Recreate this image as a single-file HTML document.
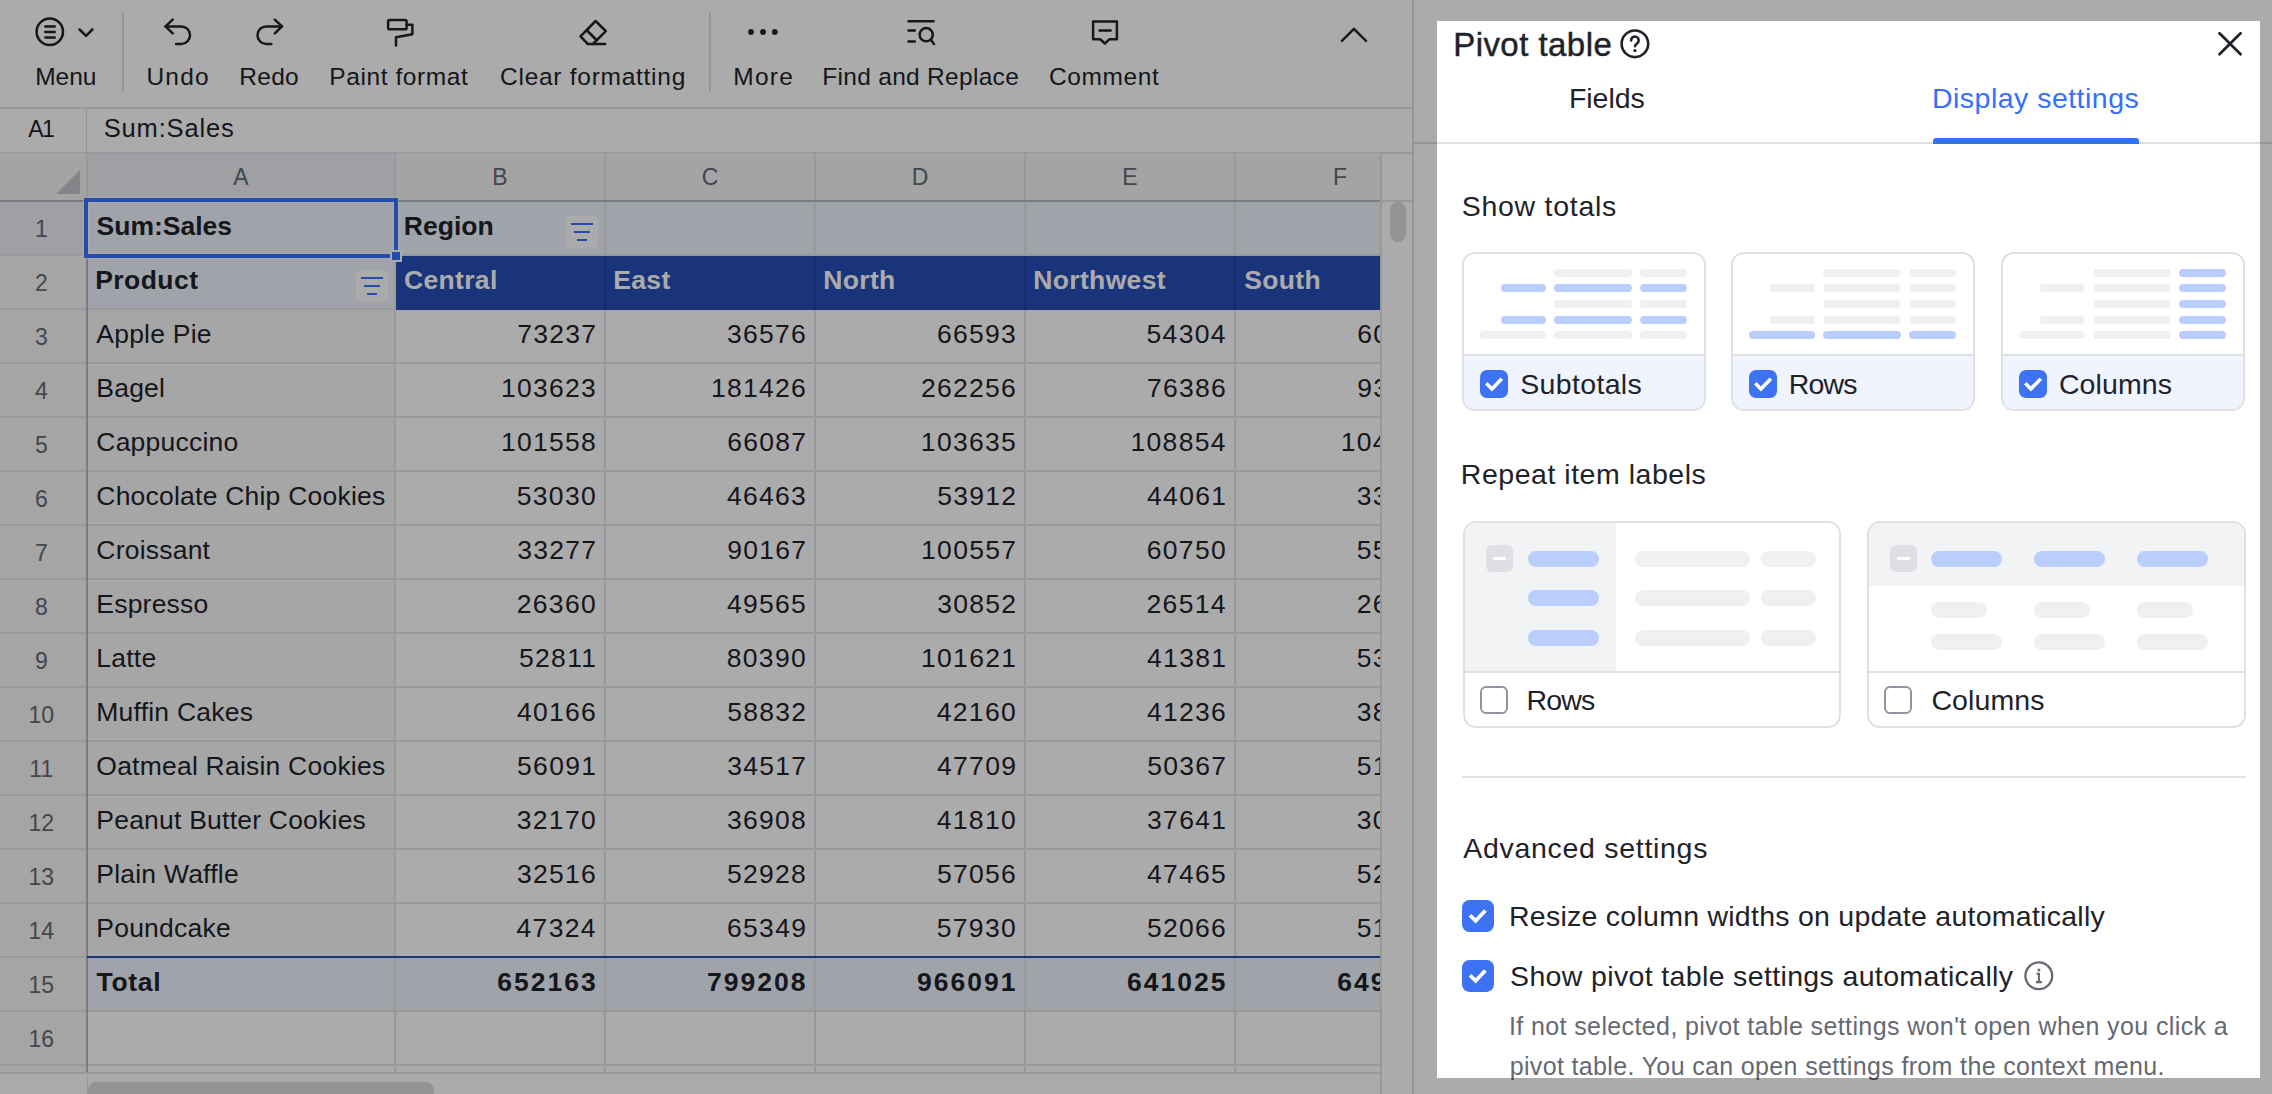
<!DOCTYPE html>
<html><head><meta charset="utf-8"><style>
html,body{margin:0;padding:0;width:2272px;height:1094px;overflow:hidden;background:#fff;}
body{position:relative;font-family:"Liberation Sans", sans-serif;}
.r{position:absolute;}
.t{position:absolute;white-space:nowrap;}
</style></head><body>
<div class="r" style="left:0px;top:0px;width:1413px;height:1094px;background:#ffffff;"></div>
<div class="r" style="left:0px;top:0px;width:1413px;height:107px;background:#ffffff;"></div>
<div class="r" style="left:0px;top:107px;width:1413px;height:2px;background:#e3e4e6;"></div>
<div class="r" style="left:122px;top:12px;width:2px;height:80px;background:#dee0e3;"></div>
<div class="r" style="left:709px;top:12px;width:2px;height:80px;background:#dee0e3;"></div>
<div class="t" style="left:35.19px;top:65.16px;font-size:24.5px;line-height:24.5px;letter-spacing:-0.016px;color:#1f2329;font-weight:normal;">Menu</div>
<div class="t" style="left:146.41px;top:65.16px;font-size:24.5px;line-height:24.5px;letter-spacing:1.245px;color:#1f2329;font-weight:normal;">Undo</div>
<div class="t" style="left:239.29px;top:65.16px;font-size:24.5px;line-height:24.5px;letter-spacing:0.286px;color:#1f2329;font-weight:normal;">Redo</div>
<div class="t" style="left:329.29px;top:65.16px;font-size:24.5px;line-height:24.5px;letter-spacing:0.591px;color:#1f2329;font-weight:normal;">Paint format</div>
<div class="t" style="left:500.07px;top:65.16px;font-size:24.5px;line-height:24.5px;letter-spacing:0.727px;color:#1f2329;font-weight:normal;">Clear formatting</div>
<div class="t" style="left:733.29px;top:65.16px;font-size:24.5px;line-height:24.5px;letter-spacing:1.225px;color:#1f2329;font-weight:normal;">More</div>
<div class="t" style="left:822.29px;top:65.16px;font-size:24.5px;line-height:24.5px;letter-spacing:0.297px;color:#1f2329;font-weight:normal;">Find and Replace</div>
<div class="t" style="left:1049.08px;top:65.16px;font-size:24.5px;line-height:24.5px;letter-spacing:0.598px;color:#1f2329;font-weight:normal;">Comment</div>
<svg class="r" style="left:34px;top:16px;" width="32" height="32" viewBox="0 0 32 32"><circle cx="15.8" cy="15.8" r="13.2" fill="none" stroke="#1f2329" stroke-width="2.5" stroke-linecap="round" stroke-linejoin="round" stroke-width="2.8"/><path d="M11.3 10.5H20.7M11.3 16H20.7M11.3 21.4H20.7" fill="none" stroke="#1f2329" stroke-width="2.5" stroke-linecap="round" stroke-linejoin="round" stroke-width="2.6"/></svg>
<svg class="r" style="left:78px;top:27px;" width="16" height="12" viewBox="0 0 16 12"><path d="M1.6 2.5L8 8.9L14.4 2.5" fill="none" stroke="#1f2329" stroke-width="2.5" stroke-linecap="round" stroke-linejoin="round" stroke-width="2.2"/></svg>
<svg class="r" style="left:162px;top:17px;" width="32" height="32" viewBox="0 0 32 32"><path d="M10.7 2.7L3.5 9.4L10.7 16.4" fill="none" stroke="#1f2329" stroke-width="2.5" stroke-linecap="round" stroke-linejoin="round"/><path d="M3.5 9.4H19.25A8.75 8.75 0 0 1 19.25 26.9H14.2" fill="none" stroke="#1f2329" stroke-width="2.5" stroke-linecap="round" stroke-linejoin="round"/></svg>
<svg class="r" style="left:254px;top:17px;" width="32" height="32" viewBox="0 0 32 32"><path d="M20.8 2.7L28 9.4L20.8 16.4" fill="none" stroke="#1f2329" stroke-width="2.5" stroke-linecap="round" stroke-linejoin="round"/><path d="M28 9.4H12.25A8.75 8.75 0 0 0 12.25 26.9H17.3" fill="none" stroke="#1f2329" stroke-width="2.5" stroke-linecap="round" stroke-linejoin="round"/></svg>
<svg class="r" style="left:385px;top:17px;" width="32" height="32" viewBox="0 0 32 32"><rect x="3.1" y="2.9" width="18.5" height="9.4" rx="1.6" fill="none" stroke="#1f2329" stroke-width="2.5" stroke-linecap="round" stroke-linejoin="round"/><path d="M21.6 7.8H27.4V17.3L11 20.3V28.6" fill="none" stroke="#1f2329" stroke-width="2.5" stroke-linecap="round" stroke-linejoin="round"/></svg>
<svg class="r" style="left:577px;top:17px;" width="32" height="32" viewBox="0 0 32 32"><path d="M10.7 26.9L3.5 19.3L18.6 4L28.8 14.2L16 27" fill="none" stroke="#1f2329" stroke-width="2.5" stroke-linecap="round" stroke-linejoin="round" stroke-width="2.2"/><path d="M10.7 26.9H28.2M10 13.5L19.5 23" fill="none" stroke="#1f2329" stroke-width="2.5" stroke-linecap="round" stroke-linejoin="round" stroke-width="2.2"/></svg>
<svg class="r" style="left:745px;top:26px;" width="36" height="12" viewBox="0 0 36 12"><circle cx="6" cy="5.9" r="2.85" fill="#1f2329"/><circle cx="18" cy="5.9" r="2.85" fill="#1f2329"/><circle cx="29.8" cy="5.9" r="2.85" fill="#1f2329"/></svg>
<svg class="r" style="left:905px;top:17px;" width="32" height="32" viewBox="0 0 32 32"><path d="M3.5 4.3H28.6M3.5 13.6H9.9M3.5 24.5H9.9" fill="none" stroke="#1f2329" stroke-width="2.5" stroke-linecap="round" stroke-linejoin="round" stroke-width="2.6"/><circle cx="21.2" cy="17.7" r="6.6" fill="none" stroke="#1f2329" stroke-width="2.5" stroke-linecap="round" stroke-linejoin="round" stroke-width="2.5"/><path d="M26.4 23.4L29 27.1" fill="none" stroke="#1f2329" stroke-width="2.5" stroke-linecap="round" stroke-linejoin="round" stroke-width="2.5"/></svg>
<svg class="r" style="left:1089px;top:17px;" width="32" height="32" viewBox="0 0 32 32"><path d="M4.1 4.4H27.9V22.2H20.6L15.9 26.5L11.1 22.2H4.1Z" fill="none" stroke="#1f2329" stroke-width="2.5" stroke-linecap="round" stroke-linejoin="round" stroke-width="2.5"/><path d="M10.5 13.6H21.6" fill="none" stroke="#1f2329" stroke-width="2.5" stroke-linecap="round" stroke-linejoin="round" stroke-width="2.5"/></svg>
<svg class="r" style="left:1338px;top:25px;" width="32" height="20" viewBox="0 0 32 20"><path d="M3.9 15.8L15.9 3.9L28 15.8" fill="none" stroke="#1f2329" stroke-width="2.5" stroke-linecap="round" stroke-linejoin="round" stroke-width="2.4"/></svg>
<div class="r" style="left:86px;top:107px;width:1px;height:46px;background:#dee0e3;"></div>
<div class="r" style="left:0px;top:152px;width:1413px;height:2px;background:#e3e4e6;"></div>
<div class="t" style="left:28.25px;top:118.33px;font-size:23px;line-height:23px;letter-spacing:-1.579px;color:#1f2329;font-weight:normal;">A1</div>
<div class="t" style="left:103.75px;top:116.21px;font-size:25.5px;line-height:25.5px;letter-spacing:0.822px;color:#1f2329;font-weight:normal;">Sum:Sales</div>
<div class="r" style="left:0;top:0;width:1380px;height:1073px;overflow:hidden">
<div class="r" style="left:0px;top:153px;width:1380px;height:47px;background:#f5f5f5;"></div>
<div class="r" style="left:87px;top:153px;width:308px;height:47px;background:#eceff5;"></div>
<div class="r" style="left:0px;top:202px;width:86px;height:872px;background:#f6f6f6;"></div>
<div class="r" style="left:0px;top:202px;width:86px;height:52px;background:#eceff5;"></div>
<div class="r" style="left:87px;top:202px;width:1380px;height:52px;background:#f0f4ff;"></div>
<div class="r" style="left:87px;top:256px;width:308px;height:52px;background:#f0f4ff;"></div>
<div class="r" style="left:87px;top:310px;width:308px;height:648px;background:#f8f8f8;"></div>
<div class="r" style="left:87px;top:958px;width:1380px;height:52px;background:#f0f4ff;"></div>
<div class="r" style="left:0px;top:254px;width:1380px;height:2px;background:#e3e4e6;"></div>
<div class="r" style="left:0px;top:308px;width:1380px;height:2px;background:#e3e4e6;"></div>
<div class="r" style="left:0px;top:362px;width:1380px;height:2px;background:#e3e4e6;"></div>
<div class="r" style="left:0px;top:416px;width:1380px;height:2px;background:#e3e4e6;"></div>
<div class="r" style="left:0px;top:470px;width:1380px;height:2px;background:#e3e4e6;"></div>
<div class="r" style="left:0px;top:524px;width:1380px;height:2px;background:#e3e4e6;"></div>
<div class="r" style="left:0px;top:578px;width:1380px;height:2px;background:#e3e4e6;"></div>
<div class="r" style="left:0px;top:632px;width:1380px;height:2px;background:#e3e4e6;"></div>
<div class="r" style="left:0px;top:686px;width:1380px;height:2px;background:#e3e4e6;"></div>
<div class="r" style="left:0px;top:740px;width:1380px;height:2px;background:#e3e4e6;"></div>
<div class="r" style="left:0px;top:794px;width:1380px;height:2px;background:#e3e4e6;"></div>
<div class="r" style="left:0px;top:848px;width:1380px;height:2px;background:#e3e4e6;"></div>
<div class="r" style="left:0px;top:902px;width:1380px;height:2px;background:#e3e4e6;"></div>
<div class="r" style="left:0px;top:956px;width:1380px;height:2px;background:#e3e4e6;"></div>
<div class="r" style="left:0px;top:1010px;width:1380px;height:2px;background:#e3e4e6;"></div>
<div class="r" style="left:0px;top:1064px;width:1380px;height:2px;background:#e3e4e6;"></div>
<div class="r" style="left:394px;top:153px;width:2px;height:920px;background:#e3e4e6;"></div>
<div class="r" style="left:604px;top:153px;width:2px;height:920px;background:#e3e4e6;"></div>
<div class="r" style="left:814px;top:153px;width:2px;height:920px;background:#e3e4e6;"></div>
<div class="r" style="left:1024px;top:153px;width:2px;height:920px;background:#e3e4e6;"></div>
<div class="r" style="left:1234px;top:153px;width:2px;height:920px;background:#e3e4e6;"></div>
<div class="r" style="left:396px;top:256px;width:1380px;height:54px;background:#264eb7;"></div>
<div class="r" style="left:604px;top:256px;width:2px;height:54px;background:#21409f;"></div>
<div class="r" style="left:814px;top:256px;width:2px;height:54px;background:#21409f;"></div>
<div class="r" style="left:1024px;top:256px;width:2px;height:54px;background:#21409f;"></div>
<div class="r" style="left:1234px;top:256px;width:2px;height:54px;background:#21409f;"></div>
<div class="r" style="left:0px;top:200px;width:1380px;height:2px;background:#b9babc;"></div>
<div class="r" style="left:86px;top:153px;width:2px;height:47px;background:#e3e4e6;"></div>
<div class="r" style="left:86px;top:202px;width:2px;height:871px;background:#b9babc;"></div>
<div class="r" style="left:87px;top:956px;width:1380px;height:2px;background:#264eb7;"></div>
<svg class="r" style="left:56px;top:170px;" width="24" height="24" viewBox="0 0 24 24"><path d="M24 0V24H0z" fill="#c2c5ca"/></svg>
<div class="t" style="left:-259.0px;width:1000px;text-align:center;top:166.23px;font-size:23px;line-height:23px;color:#646a73;font-weight:normal;">A</div>
<div class="t" style="left:0.0px;width:1000px;text-align:center;top:166.23px;font-size:23px;line-height:23px;color:#646a73;font-weight:normal;">B</div>
<div class="t" style="left:210.0px;width:1000px;text-align:center;top:166.23px;font-size:23px;line-height:23px;color:#646a73;font-weight:normal;">C</div>
<div class="t" style="left:420.0px;width:1000px;text-align:center;top:166.23px;font-size:23px;line-height:23px;color:#646a73;font-weight:normal;">D</div>
<div class="t" style="left:630.0px;width:1000px;text-align:center;top:166.23px;font-size:23px;line-height:23px;color:#646a73;font-weight:normal;">E</div>
<div class="t" style="left:840.0px;width:1000px;text-align:center;top:166.23px;font-size:23px;line-height:23px;color:#646a73;font-weight:normal;">F</div>
<div class="t" style="left:-458.7px;width:1000px;text-align:center;top:218.03px;font-size:23px;line-height:23px;color:#646a73;font-weight:normal;">1</div>
<div class="t" style="left:-458.7px;width:1000px;text-align:center;top:272.03px;font-size:23px;line-height:23px;color:#646a73;font-weight:normal;">2</div>
<div class="t" style="left:-458.7px;width:1000px;text-align:center;top:326.03px;font-size:23px;line-height:23px;color:#646a73;font-weight:normal;">3</div>
<div class="t" style="left:-458.7px;width:1000px;text-align:center;top:380.03px;font-size:23px;line-height:23px;color:#646a73;font-weight:normal;">4</div>
<div class="t" style="left:-458.7px;width:1000px;text-align:center;top:434.03px;font-size:23px;line-height:23px;color:#646a73;font-weight:normal;">5</div>
<div class="t" style="left:-458.7px;width:1000px;text-align:center;top:488.03px;font-size:23px;line-height:23px;color:#646a73;font-weight:normal;">6</div>
<div class="t" style="left:-458.7px;width:1000px;text-align:center;top:542.03px;font-size:23px;line-height:23px;color:#646a73;font-weight:normal;">7</div>
<div class="t" style="left:-458.7px;width:1000px;text-align:center;top:596.03px;font-size:23px;line-height:23px;color:#646a73;font-weight:normal;">8</div>
<div class="t" style="left:-458.7px;width:1000px;text-align:center;top:650.03px;font-size:23px;line-height:23px;color:#646a73;font-weight:normal;">9</div>
<div class="t" style="left:-458.7px;width:1000px;text-align:center;top:704.03px;font-size:23px;line-height:23px;color:#646a73;font-weight:normal;">10</div>
<div class="t" style="left:-458.7px;width:1000px;text-align:center;top:758.03px;font-size:23px;line-height:23px;color:#646a73;font-weight:normal;">11</div>
<div class="t" style="left:-458.7px;width:1000px;text-align:center;top:812.03px;font-size:23px;line-height:23px;color:#646a73;font-weight:normal;">12</div>
<div class="t" style="left:-458.7px;width:1000px;text-align:center;top:866.03px;font-size:23px;line-height:23px;color:#646a73;font-weight:normal;">13</div>
<div class="t" style="left:-458.7px;width:1000px;text-align:center;top:920.03px;font-size:23px;line-height:23px;color:#646a73;font-weight:normal;">14</div>
<div class="t" style="left:-458.7px;width:1000px;text-align:center;top:974.03px;font-size:23px;line-height:23px;color:#646a73;font-weight:normal;">15</div>
<div class="t" style="left:-458.7px;width:1000px;text-align:center;top:1028.03px;font-size:23px;line-height:23px;color:#646a73;font-weight:normal;">16</div>
<div class="t" style="left:-458.7px;width:1000px;text-align:center;top:1082.03px;font-size:23px;line-height:23px;color:#646a73;font-weight:normal;">17</div>
<div class="t" style="left:96.56px;top:213.47px;font-size:26.5px;line-height:26.5px;letter-spacing:-0.012px;color:#1f2329;font-weight:bold;">Sum:Sales</div>
<div class="t" style="left:403.85px;top:213.47px;font-size:26.5px;line-height:26.5px;letter-spacing:-0.003px;color:#1f2329;font-weight:bold;">Region</div>
<div class="t" style="left:95.15px;top:267.47px;font-size:26.5px;line-height:26.5px;letter-spacing:0.458px;color:#1f2329;font-weight:bold;">Product</div>
<div class="t" style="left:403.91px;top:267.47px;font-size:26.5px;line-height:26.5px;letter-spacing:0.350px;color:#ffffff;font-weight:bold">Central</div>
<div class="t" style="left:613.25px;top:267.47px;font-size:26.5px;line-height:26.5px;letter-spacing:0.350px;color:#ffffff;font-weight:bold">East</div>
<div class="t" style="left:823.25px;top:267.47px;font-size:26.5px;line-height:26.5px;letter-spacing:0.350px;color:#ffffff;font-weight:bold">North</div>
<div class="t" style="left:1033.25px;top:267.47px;font-size:26.5px;line-height:26.5px;letter-spacing:0.350px;color:#ffffff;font-weight:bold">Northwest</div>
<div class="t" style="left:1244.26px;top:267.47px;font-size:26.5px;line-height:26.5px;letter-spacing:0.350px;color:#ffffff;font-weight:bold">South</div>
<div class="t" style="left:96.3px;top:321.47px;font-size:26.5px;line-height:26.5px;letter-spacing:0.22px;color:#1f2329">Apple Pie</div>
<div class="t" style="left:517.13px;top:321.47px;font-size:26.5px;line-height:26.5px;letter-spacing:1.300px;color:#1f2329;font-weight:normal">73237</div>
<div class="t" style="left:726.94px;top:321.47px;font-size:26.5px;line-height:26.5px;letter-spacing:1.300px;color:#1f2329;font-weight:normal">36576</div>
<div class="t" style="left:936.94px;top:321.47px;font-size:26.5px;line-height:26.5px;letter-spacing:1.300px;color:#1f2329;font-weight:normal">66593</div>
<div class="t" style="left:1146.57px;top:321.47px;font-size:26.5px;line-height:26.5px;letter-spacing:1.300px;color:#1f2329;font-weight:normal">54304</div>
<div class="t" style="left:1357.13px;top:321.47px;font-size:26.5px;line-height:26.5px;letter-spacing:1.300px;color:#1f2329;font-weight:normal">60412</div>
<div class="t" style="left:96.3px;top:375.47px;font-size:26.5px;line-height:26.5px;letter-spacing:0.22px;color:#1f2329">Bagel</div>
<div class="t" style="left:500.91px;top:375.47px;font-size:26.5px;line-height:26.5px;letter-spacing:1.300px;color:#1f2329;font-weight:normal">103623</div>
<div class="t" style="left:710.91px;top:375.47px;font-size:26.5px;line-height:26.5px;letter-spacing:1.300px;color:#1f2329;font-weight:normal">181426</div>
<div class="t" style="left:920.91px;top:375.47px;font-size:26.5px;line-height:26.5px;letter-spacing:1.300px;color:#1f2329;font-weight:normal">262256</div>
<div class="t" style="left:1146.94px;top:375.47px;font-size:26.5px;line-height:26.5px;letter-spacing:1.300px;color:#1f2329;font-weight:normal">76386</div>
<div class="t" style="left:1357.13px;top:375.47px;font-size:26.5px;line-height:26.5px;letter-spacing:1.300px;color:#1f2329;font-weight:normal">93412</div>
<div class="t" style="left:96.3px;top:429.47px;font-size:26.5px;line-height:26.5px;letter-spacing:0.22px;color:#1f2329">Cappuccino</div>
<div class="t" style="left:500.91px;top:429.47px;font-size:26.5px;line-height:26.5px;letter-spacing:1.300px;color:#1f2329;font-weight:normal">101558</div>
<div class="t" style="left:727.13px;top:429.47px;font-size:26.5px;line-height:26.5px;letter-spacing:1.300px;color:#1f2329;font-weight:normal">66087</div>
<div class="t" style="left:920.86px;top:429.47px;font-size:26.5px;line-height:26.5px;letter-spacing:1.300px;color:#1f2329;font-weight:normal">103635</div>
<div class="t" style="left:1130.54px;top:429.47px;font-size:26.5px;line-height:26.5px;letter-spacing:1.300px;color:#1f2329;font-weight:normal">108854</div>
<div class="t" style="left:1340.78px;top:429.47px;font-size:26.5px;line-height:26.5px;letter-spacing:1.300px;color:#1f2329;font-weight:normal">104120</div>
<div class="t" style="left:96.3px;top:483.47px;font-size:26.5px;line-height:26.5px;letter-spacing:0.22px;color:#1f2329">Chocolate Chip Cookies</div>
<div class="t" style="left:516.81px;top:483.47px;font-size:26.5px;line-height:26.5px;letter-spacing:1.300px;color:#1f2329;font-weight:normal">53030</div>
<div class="t" style="left:726.94px;top:483.47px;font-size:26.5px;line-height:26.5px;letter-spacing:1.300px;color:#1f2329;font-weight:normal">46463</div>
<div class="t" style="left:937.13px;top:483.47px;font-size:26.5px;line-height:26.5px;letter-spacing:1.300px;color:#1f2329;font-weight:normal">53912</div>
<div class="t" style="left:1147.08px;top:483.47px;font-size:26.5px;line-height:26.5px;letter-spacing:1.300px;color:#1f2329;font-weight:normal">44061</div>
<div class="t" style="left:1356.81px;top:483.47px;font-size:26.5px;line-height:26.5px;letter-spacing:1.300px;color:#1f2329;font-weight:normal">33210</div>
<div class="t" style="left:96.3px;top:537.47px;font-size:26.5px;line-height:26.5px;letter-spacing:0.22px;color:#1f2329">Croissant</div>
<div class="t" style="left:517.13px;top:537.47px;font-size:26.5px;line-height:26.5px;letter-spacing:1.300px;color:#1f2329;font-weight:normal">33277</div>
<div class="t" style="left:727.13px;top:537.47px;font-size:26.5px;line-height:26.5px;letter-spacing:1.300px;color:#1f2329;font-weight:normal">90167</div>
<div class="t" style="left:921.09px;top:537.47px;font-size:26.5px;line-height:26.5px;letter-spacing:1.300px;color:#1f2329;font-weight:normal">100557</div>
<div class="t" style="left:1146.81px;top:537.47px;font-size:26.5px;line-height:26.5px;letter-spacing:1.300px;color:#1f2329;font-weight:normal">60750</div>
<div class="t" style="left:1356.81px;top:537.47px;font-size:26.5px;line-height:26.5px;letter-spacing:1.300px;color:#1f2329;font-weight:normal">55310</div>
<div class="t" style="left:96.3px;top:591.47px;font-size:26.5px;line-height:26.5px;letter-spacing:0.22px;color:#1f2329">Espresso</div>
<div class="t" style="left:516.81px;top:591.47px;font-size:26.5px;line-height:26.5px;letter-spacing:1.300px;color:#1f2329;font-weight:normal">26360</div>
<div class="t" style="left:726.89px;top:591.47px;font-size:26.5px;line-height:26.5px;letter-spacing:1.300px;color:#1f2329;font-weight:normal">49565</div>
<div class="t" style="left:937.13px;top:591.47px;font-size:26.5px;line-height:26.5px;letter-spacing:1.300px;color:#1f2329;font-weight:normal">30852</div>
<div class="t" style="left:1146.57px;top:591.47px;font-size:26.5px;line-height:26.5px;letter-spacing:1.300px;color:#1f2329;font-weight:normal">26514</div>
<div class="t" style="left:1356.81px;top:591.47px;font-size:26.5px;line-height:26.5px;letter-spacing:1.300px;color:#1f2329;font-weight:normal">26410</div>
<div class="t" style="left:96.3px;top:645.47px;font-size:26.5px;line-height:26.5px;letter-spacing:0.22px;color:#1f2329">Latte</div>
<div class="t" style="left:519.06px;top:645.47px;font-size:26.5px;line-height:26.5px;letter-spacing:1.300px;color:#1f2329;font-weight:normal">52811</div>
<div class="t" style="left:726.81px;top:645.47px;font-size:26.5px;line-height:26.5px;letter-spacing:1.300px;color:#1f2329;font-weight:normal">80390</div>
<div class="t" style="left:921.04px;top:645.47px;font-size:26.5px;line-height:26.5px;letter-spacing:1.300px;color:#1f2329;font-weight:normal">101621</div>
<div class="t" style="left:1147.08px;top:645.47px;font-size:26.5px;line-height:26.5px;letter-spacing:1.300px;color:#1f2329;font-weight:normal">41381</div>
<div class="t" style="left:1356.81px;top:645.47px;font-size:26.5px;line-height:26.5px;letter-spacing:1.300px;color:#1f2329;font-weight:normal">53310</div>
<div class="t" style="left:96.3px;top:699.47px;font-size:26.5px;line-height:26.5px;letter-spacing:0.22px;color:#1f2329">Muffin Cakes</div>
<div class="t" style="left:516.94px;top:699.47px;font-size:26.5px;line-height:26.5px;letter-spacing:1.300px;color:#1f2329;font-weight:normal">40166</div>
<div class="t" style="left:727.13px;top:699.47px;font-size:26.5px;line-height:26.5px;letter-spacing:1.300px;color:#1f2329;font-weight:normal">58832</div>
<div class="t" style="left:936.81px;top:699.47px;font-size:26.5px;line-height:26.5px;letter-spacing:1.300px;color:#1f2329;font-weight:normal">42160</div>
<div class="t" style="left:1146.94px;top:699.47px;font-size:26.5px;line-height:26.5px;letter-spacing:1.300px;color:#1f2329;font-weight:normal">41236</div>
<div class="t" style="left:1356.81px;top:699.47px;font-size:26.5px;line-height:26.5px;letter-spacing:1.300px;color:#1f2329;font-weight:normal">38410</div>
<div class="t" style="left:96.3px;top:753.47px;font-size:26.5px;line-height:26.5px;letter-spacing:0.22px;color:#1f2329">Oatmeal Raisin Cookies</div>
<div class="t" style="left:517.08px;top:753.47px;font-size:26.5px;line-height:26.5px;letter-spacing:1.300px;color:#1f2329;font-weight:normal">56091</div>
<div class="t" style="left:727.13px;top:753.47px;font-size:26.5px;line-height:26.5px;letter-spacing:1.300px;color:#1f2329;font-weight:normal">34517</div>
<div class="t" style="left:937.05px;top:753.47px;font-size:26.5px;line-height:26.5px;letter-spacing:1.300px;color:#1f2329;font-weight:normal">47709</div>
<div class="t" style="left:1147.13px;top:753.47px;font-size:26.5px;line-height:26.5px;letter-spacing:1.300px;color:#1f2329;font-weight:normal">50367</div>
<div class="t" style="left:1356.81px;top:753.47px;font-size:26.5px;line-height:26.5px;letter-spacing:1.300px;color:#1f2329;font-weight:normal">51210</div>
<div class="t" style="left:96.3px;top:807.47px;font-size:26.5px;line-height:26.5px;letter-spacing:0.22px;color:#1f2329">Peanut Butter Cookies</div>
<div class="t" style="left:516.81px;top:807.47px;font-size:26.5px;line-height:26.5px;letter-spacing:1.300px;color:#1f2329;font-weight:normal">32170</div>
<div class="t" style="left:726.94px;top:807.47px;font-size:26.5px;line-height:26.5px;letter-spacing:1.300px;color:#1f2329;font-weight:normal">36908</div>
<div class="t" style="left:936.81px;top:807.47px;font-size:26.5px;line-height:26.5px;letter-spacing:1.300px;color:#1f2329;font-weight:normal">41810</div>
<div class="t" style="left:1147.08px;top:807.47px;font-size:26.5px;line-height:26.5px;letter-spacing:1.300px;color:#1f2329;font-weight:normal">37641</div>
<div class="t" style="left:1356.81px;top:807.47px;font-size:26.5px;line-height:26.5px;letter-spacing:1.300px;color:#1f2329;font-weight:normal">30410</div>
<div class="t" style="left:96.3px;top:861.47px;font-size:26.5px;line-height:26.5px;letter-spacing:0.22px;color:#1f2329">Plain Waffle</div>
<div class="t" style="left:516.94px;top:861.47px;font-size:26.5px;line-height:26.5px;letter-spacing:1.300px;color:#1f2329;font-weight:normal">32516</div>
<div class="t" style="left:726.94px;top:861.47px;font-size:26.5px;line-height:26.5px;letter-spacing:1.300px;color:#1f2329;font-weight:normal">52928</div>
<div class="t" style="left:936.94px;top:861.47px;font-size:26.5px;line-height:26.5px;letter-spacing:1.300px;color:#1f2329;font-weight:normal">57056</div>
<div class="t" style="left:1146.89px;top:861.47px;font-size:26.5px;line-height:26.5px;letter-spacing:1.300px;color:#1f2329;font-weight:normal">47465</div>
<div class="t" style="left:1356.81px;top:861.47px;font-size:26.5px;line-height:26.5px;letter-spacing:1.300px;color:#1f2329;font-weight:normal">52310</div>
<div class="t" style="left:96.3px;top:915.47px;font-size:26.5px;line-height:26.5px;letter-spacing:0.22px;color:#1f2329">Poundcake</div>
<div class="t" style="left:516.57px;top:915.47px;font-size:26.5px;line-height:26.5px;letter-spacing:1.300px;color:#1f2329;font-weight:normal">47324</div>
<div class="t" style="left:727.05px;top:915.47px;font-size:26.5px;line-height:26.5px;letter-spacing:1.300px;color:#1f2329;font-weight:normal">65349</div>
<div class="t" style="left:936.81px;top:915.47px;font-size:26.5px;line-height:26.5px;letter-spacing:1.300px;color:#1f2329;font-weight:normal">57930</div>
<div class="t" style="left:1146.94px;top:915.47px;font-size:26.5px;line-height:26.5px;letter-spacing:1.300px;color:#1f2329;font-weight:normal">52066</div>
<div class="t" style="left:1356.81px;top:915.47px;font-size:26.5px;line-height:26.5px;letter-spacing:1.300px;color:#1f2329;font-weight:normal">51310</div>
<div class="t" style="left:96.61px;top:969.47px;font-size:26.5px;line-height:26.5px;letter-spacing:0.650px;color:#1f2329;font-weight:bold;">Total</div>
<div class="t" style="left:497.20px;top:969.47px;font-size:26.5px;line-height:26.5px;letter-spacing:2.000px;color:#1f2329;font-weight:bold">652163</div>
<div class="t" style="left:707.06px;top:969.47px;font-size:26.5px;line-height:26.5px;letter-spacing:2.000px;color:#1f2329;font-weight:bold">799208</div>
<div class="t" style="left:916.99px;top:969.47px;font-size:26.5px;line-height:26.5px;letter-spacing:2.000px;color:#1f2329;font-weight:bold">966091</div>
<div class="t" style="left:1126.99px;top:969.47px;font-size:26.5px;line-height:26.5px;letter-spacing:2.000px;color:#1f2329;font-weight:bold">641025</div>
<div class="t" style="left:1337.33px;top:969.47px;font-size:26.5px;line-height:26.5px;letter-spacing:2.000px;color:#1f2329;font-weight:bold">649310</div>
<div class="r" style="left:566px;top:216px;width:32px;height:32px;background:#ffffff;border-radius:5px;"></div>
<svg class="r" style="left:566px;top:216px;" width="32" height="32" viewBox="0 0 32 32"><path d="M5 8h22M8 16h16M11 24h10" stroke="#3370ff" stroke-width="2"/></svg>
<div class="r" style="left:356px;top:269.5px;width:32px;height:32px;background:#ffffff;border-radius:5px;"></div>
<svg class="r" style="left:356px;top:269.5px;" width="32" height="32" viewBox="0 0 32 32"><path d="M5 8h22M8 16h16M11 24h10" stroke="#3370ff" stroke-width="2"/></svg>
<div class="r" style="left:83px;top:197px;width:316px;height:62px;background:transparent;box-sizing:border-box;border:1px solid rgba(255,255,255,0.7);"></div>
<div class="r" style="left:84px;top:198px;width:314px;height:60px;background:transparent;box-sizing:border-box;border:4px solid #3370ff;"></div>
<div class="r" style="left:88px;top:202px;width:306px;height:52px;background:transparent;box-sizing:border-box;border:1px solid rgba(255,255,255,0.6);"></div>
<div class="r" style="left:390px;top:250px;width:12px;height:12px;background:#ffffff;"></div>
<div class="r" style="left:392px;top:252px;width:8px;height:8px;background:#3370ff;"></div>
</div>
<div class="r" style="left:1380px;top:153px;width:2px;height:941px;background:#e3e4e6;"></div>
<div class="r" style="left:1380px;top:200px;width:33px;height:2px;background:#e3e4e6;"></div>
<div class="r" style="left:1390px;top:202px;width:16px;height:40px;background:#dcdddf;border-radius:8px;"></div>
<div class="r" style="left:0px;top:1072px;width:1380px;height:2px;background:#e3e4e6;"></div>
<div class="r" style="left:87px;top:1074px;width:1px;height:20px;background:#e3e4e6;"></div>
<div class="r" style="left:88px;top:1082px;width:346px;height:20px;background:#dcdddf;border-radius:8px;"></div>
<div class="r" style="left:1412px;top:0px;width:2px;height:1094px;background:#dee0e3;"></div>
<div class="r" style="left:1414px;top:0px;width:858px;height:1094px;background:#ffffff;"></div>
<div class="r" style="left:1414px;top:142px;width:858px;height:1.5px;background:#dee0e3;"></div>
<div class="t" style="left:1453.19px;top:28.37px;font-size:33px;line-height:33px;letter-spacing:0.448px;color:#1f2329;font-weight:normal;-webkit-text-stroke:0.45px #1f2329;">Pivot table</div>
<svg class="r" style="left:1619px;top:28px;" width="32" height="32" viewBox="0 0 32 32"><circle cx="15.9" cy="15.8" r="13.3" fill="none" stroke="#1f2329" stroke-width="2.6"/><path d="M12.1 12.4A3.8 3.8 0 1 1 18.4 15.2C17 16.4 16 17 16 18.2" fill="none" stroke="#1f2329" stroke-width="2.6" stroke-linecap="round"/><circle cx="15.9" cy="22.6" r="1.6" fill="#1f2329"/></svg>
<svg class="r" style="left:2216px;top:30px;" width="28" height="28" viewBox="0 0 28 28"><path d="M3.5 3.2L24.6 24.3M24.6 3.2L3.5 24.3" stroke="#1f2329" stroke-width="2.7" stroke-linecap="round"/></svg>
<div class="t" style="left:1568.96px;top:84.07px;font-size:28.5px;line-height:28.5px;letter-spacing:-0.055px;color:#1f2329;font-weight:normal;">Fields</div>
<div class="t" style="left:1931.96px;top:84.07px;font-size:28.5px;line-height:28.5px;letter-spacing:0.479px;color:#3370ff;font-weight:normal;">Display settings</div>
<div class="r" style="left:1933px;top:138px;width:206px;height:6px;background:#3370ff;border-radius:3px 3px 0 0;"></div>
<div class="t" style="left:1461.72px;top:191.67px;font-size:28.5px;line-height:28.5px;letter-spacing:0.729px;color:#1f2329;font-weight:normal;">Show totals</div>
<div class="t" style="left:1460.86px;top:459.77px;font-size:28.5px;line-height:28.5px;letter-spacing:0.519px;color:#1f2329;font-weight:normal;">Repeat item labels</div>
<div class="t" style="left:1463.24px;top:833.97px;font-size:28.5px;line-height:28.5px;letter-spacing:0.705px;color:#1f2329;font-weight:normal;">Advanced settings</div>
<div class="r" style="left:1462px;top:252px;width:244px;height:159px;box-sizing:border-box;border:2px solid #dee0e3;border-radius:13px;overflow:hidden;background:#fff"><div class="r" style="left:0;top:100px;width:100%;height:60px;background:#f0f4ff;border-top:2px solid #dee0e3"></div></div>
<div class="r" style="left:1554px;top:268.7px;width:78px;height:8px;background:#eff0f1;border-radius:4px;"></div>
<div class="r" style="left:1640px;top:268.7px;width:47px;height:8px;background:#eff0f1;border-radius:4px;"></div>
<div class="r" style="left:1501px;top:284.3px;width:45px;height:8px;background:#bacefd;border-radius:4px;"></div>
<div class="r" style="left:1554px;top:284.3px;width:78px;height:8px;background:#bacefd;border-radius:4px;"></div>
<div class="r" style="left:1640px;top:284.3px;width:47px;height:8px;background:#bacefd;border-radius:4px;"></div>
<div class="r" style="left:1554px;top:300px;width:78px;height:8px;background:#eff0f1;border-radius:4px;"></div>
<div class="r" style="left:1640px;top:300px;width:47px;height:8px;background:#eff0f1;border-radius:4px;"></div>
<div class="r" style="left:1501px;top:315.6px;width:45px;height:8px;background:#bacefd;border-radius:4px;"></div>
<div class="r" style="left:1554px;top:315.6px;width:78px;height:8px;background:#bacefd;border-radius:4px;"></div>
<div class="r" style="left:1640px;top:315.6px;width:47px;height:8px;background:#bacefd;border-radius:4px;"></div>
<div class="r" style="left:1480px;top:331.2px;width:66px;height:8px;background:#eff0f1;border-radius:4px;"></div>
<div class="r" style="left:1554px;top:331.2px;width:78px;height:8px;background:#eff0f1;border-radius:4px;"></div>
<div class="r" style="left:1640px;top:331.2px;width:47px;height:8px;background:#eff0f1;border-radius:4px;"></div>
<div class="r" style="left:1479.5px;top:370px;width:28px;height:28px;background:#3d72f2;border-radius:7px;"></div>
<svg class="r" style="left:1479.5px;top:370px;" width="28" height="28" viewBox="0 0 28 28"><path d="M6.3 13.3L11.9 18.9L21.8 8.7" fill="none" stroke="#fff" stroke-width="3.6" stroke-linecap="butt" stroke-linejoin="miter"/></svg>
<div class="t" style="left:1520.22px;top:369.87px;font-size:28.5px;line-height:28.5px;letter-spacing:0.336px;color:#1f2329;font-weight:normal;">Subtotals</div>
<div class="r" style="left:1731px;top:252px;width:244px;height:159px;box-sizing:border-box;border:2px solid #dee0e3;border-radius:13px;overflow:hidden;background:#fff"><div class="r" style="left:0;top:100px;width:100%;height:60px;background:#f0f4ff;border-top:2px solid #dee0e3"></div></div>
<div class="r" style="left:1823px;top:268.7px;width:78px;height:8px;background:#eff0f1;border-radius:4px;"></div>
<div class="r" style="left:1909px;top:268.7px;width:47px;height:8px;background:#eff0f1;border-radius:4px;"></div>
<div class="r" style="left:1770px;top:284.3px;width:45px;height:8px;background:#eff0f1;border-radius:4px;"></div>
<div class="r" style="left:1823px;top:284.3px;width:78px;height:8px;background:#eff0f1;border-radius:4px;"></div>
<div class="r" style="left:1909px;top:284.3px;width:47px;height:8px;background:#eff0f1;border-radius:4px;"></div>
<div class="r" style="left:1823px;top:300px;width:78px;height:8px;background:#eff0f1;border-radius:4px;"></div>
<div class="r" style="left:1909px;top:300px;width:47px;height:8px;background:#eff0f1;border-radius:4px;"></div>
<div class="r" style="left:1770px;top:315.6px;width:45px;height:8px;background:#eff0f1;border-radius:4px;"></div>
<div class="r" style="left:1823px;top:315.6px;width:78px;height:8px;background:#eff0f1;border-radius:4px;"></div>
<div class="r" style="left:1909px;top:315.6px;width:47px;height:8px;background:#eff0f1;border-radius:4px;"></div>
<div class="r" style="left:1749px;top:331.2px;width:66px;height:8px;background:#bacefd;border-radius:4px;"></div>
<div class="r" style="left:1823px;top:331.2px;width:78px;height:8px;background:#bacefd;border-radius:4px;"></div>
<div class="r" style="left:1909px;top:331.2px;width:47px;height:8px;background:#bacefd;border-radius:4px;"></div>
<div class="r" style="left:1748.5px;top:370px;width:28px;height:28px;background:#3d72f2;border-radius:7px;"></div>
<svg class="r" style="left:1748.5px;top:370px;" width="28" height="28" viewBox="0 0 28 28"><path d="M6.3 13.3L11.9 18.9L21.8 8.7" fill="none" stroke="#fff" stroke-width="3.6" stroke-linecap="butt" stroke-linejoin="miter"/></svg>
<div class="t" style="left:1788.86px;top:369.87px;font-size:28.5px;line-height:28.5px;letter-spacing:-0.838px;color:#1f2329;font-weight:normal;">Rows</div>
<div class="r" style="left:2001px;top:252px;width:244px;height:159px;box-sizing:border-box;border:2px solid #dee0e3;border-radius:13px;overflow:hidden;background:#fff"><div class="r" style="left:0;top:100px;width:100%;height:60px;background:#f0f4ff;border-top:2px solid #dee0e3"></div></div>
<div class="r" style="left:2093px;top:268.7px;width:78px;height:8px;background:#eff0f1;border-radius:4px;"></div>
<div class="r" style="left:2179px;top:268.7px;width:47px;height:8px;background:#bacefd;border-radius:4px;"></div>
<div class="r" style="left:2040px;top:284.3px;width:45px;height:8px;background:#eff0f1;border-radius:4px;"></div>
<div class="r" style="left:2093px;top:284.3px;width:78px;height:8px;background:#eff0f1;border-radius:4px;"></div>
<div class="r" style="left:2179px;top:284.3px;width:47px;height:8px;background:#bacefd;border-radius:4px;"></div>
<div class="r" style="left:2093px;top:300px;width:78px;height:8px;background:#eff0f1;border-radius:4px;"></div>
<div class="r" style="left:2179px;top:300px;width:47px;height:8px;background:#bacefd;border-radius:4px;"></div>
<div class="r" style="left:2040px;top:315.6px;width:45px;height:8px;background:#eff0f1;border-radius:4px;"></div>
<div class="r" style="left:2093px;top:315.6px;width:78px;height:8px;background:#eff0f1;border-radius:4px;"></div>
<div class="r" style="left:2179px;top:315.6px;width:47px;height:8px;background:#bacefd;border-radius:4px;"></div>
<div class="r" style="left:2019px;top:331.2px;width:66px;height:8px;background:#eff0f1;border-radius:4px;"></div>
<div class="r" style="left:2093px;top:331.2px;width:78px;height:8px;background:#eff0f1;border-radius:4px;"></div>
<div class="r" style="left:2179px;top:331.2px;width:47px;height:8px;background:#bacefd;border-radius:4px;"></div>
<div class="r" style="left:2018.5px;top:370px;width:28px;height:28px;background:#3d72f2;border-radius:7px;"></div>
<svg class="r" style="left:2018.5px;top:370px;" width="28" height="28" viewBox="0 0 28 28"><path d="M6.3 13.3L11.9 18.9L21.8 8.7" fill="none" stroke="#fff" stroke-width="3.6" stroke-linecap="butt" stroke-linejoin="miter"/></svg>
<div class="t" style="left:2058.88px;top:369.87px;font-size:28.5px;line-height:28.5px;letter-spacing:0.098px;color:#1f2329;font-weight:normal;">Columns</div>
<div class="r" style="left:1462.5px;top:520.5px;width:378.5px;height:207px;box-sizing:border-box;border:2px solid #dee0e3;border-radius:13px;overflow:hidden;background:#fff"><div class="r" style="left:0;top:0;width:151px;height:148px;background:#f2f3f5"></div><div class="r" style="left:0;top:148px;width:100%;height:60px;border-top:2px solid #dee0e3"></div></div>
<div class="r" style="left:1485.5px;top:544.5px;width:27px;height:27px;background:#dfe0e3;border-radius:6px;"></div>
<div class="r" style="left:1492.5px;top:557px;width:13px;height:2.5px;background:#ffffff;border-radius:1px;"></div>
<div class="r" style="left:1479.5px;top:686px;width:28px;height:28px;background:#fff;box-sizing:border-box;border:2px solid #8f959e;border-radius:6px;"></div>
<div class="t" style="left:1526.46px;top:686.47px;font-size:28.5px;line-height:28.5px;letter-spacing:-0.838px;color:#1f2329;font-weight:normal;">Rows</div>
<div class="r" style="left:1866.5px;top:520.5px;width:379px;height:207px;box-sizing:border-box;border:2px solid #dee0e3;border-radius:13px;overflow:hidden;background:#fff"><div class="r" style="left:0;top:0;width:100%;height:63px;background:#f2f3f5"></div><div class="r" style="left:0;top:148px;width:100%;height:60px;border-top:2px solid #dee0e3"></div></div>
<div class="r" style="left:1889.5px;top:544.5px;width:27px;height:27px;background:#dfe0e3;border-radius:6px;"></div>
<div class="r" style="left:1896.5px;top:557px;width:13px;height:2.5px;background:#ffffff;border-radius:1px;"></div>
<div class="r" style="left:1883.5px;top:686px;width:28px;height:28px;background:#fff;box-sizing:border-box;border:2px solid #8f959e;border-radius:6px;"></div>
<div class="t" style="left:1931.38px;top:686.47px;font-size:28.5px;line-height:28.5px;letter-spacing:0.098px;color:#1f2329;font-weight:normal;">Columns</div>
<div class="r" style="left:1527.5px;top:550.5px;width:71px;height:16px;background:#bacefd;border-radius:8px;"></div>
<div class="r" style="left:1634.5px;top:550.5px;width:115px;height:16px;background:#eff0f1;border-radius:8px;"></div>
<div class="r" style="left:1760.5px;top:550.5px;width:55.5px;height:16px;background:#eff0f1;border-radius:8px;"></div>
<div class="r" style="left:1527.5px;top:590px;width:71px;height:16px;background:#bacefd;border-radius:8px;"></div>
<div class="r" style="left:1634.5px;top:590px;width:115px;height:16px;background:#eff0f1;border-radius:8px;"></div>
<div class="r" style="left:1760.5px;top:590px;width:55.5px;height:16px;background:#eff0f1;border-radius:8px;"></div>
<div class="r" style="left:1527.5px;top:629.5px;width:71px;height:16px;background:#bacefd;border-radius:8px;"></div>
<div class="r" style="left:1634.5px;top:629.5px;width:115px;height:16px;background:#eff0f1;border-radius:8px;"></div>
<div class="r" style="left:1760.5px;top:629.5px;width:55.5px;height:16px;background:#eff0f1;border-radius:8px;"></div>
<div class="r" style="left:1931px;top:550.5px;width:71px;height:16px;background:#bacefd;border-radius:8px;"></div>
<div class="r" style="left:1931px;top:601.5px;width:55.5px;height:16px;background:#eff0f1;border-radius:8px;"></div>
<div class="r" style="left:1931px;top:633.5px;width:71px;height:16px;background:#eff0f1;border-radius:8px;"></div>
<div class="r" style="left:2034px;top:550.5px;width:71px;height:16px;background:#bacefd;border-radius:8px;"></div>
<div class="r" style="left:2034px;top:601.5px;width:55.5px;height:16px;background:#eff0f1;border-radius:8px;"></div>
<div class="r" style="left:2034px;top:633.5px;width:71px;height:16px;background:#eff0f1;border-radius:8px;"></div>
<div class="r" style="left:2137px;top:550.5px;width:71px;height:16px;background:#bacefd;border-radius:8px;"></div>
<div class="r" style="left:2137px;top:601.5px;width:55.5px;height:16px;background:#eff0f1;border-radius:8px;"></div>
<div class="r" style="left:2137px;top:633.5px;width:71px;height:16px;background:#eff0f1;border-radius:8px;"></div>
<div class="r" style="left:1462px;top:775.5px;width:784px;height:2px;background:#dee0e3;"></div>
<div class="r" style="left:1462px;top:900px;width:32px;height:32px;background:#3d72f2;border-radius:7.4px;"></div>
<svg class="r" style="left:1462px;top:900px;" width="32" height="32" viewBox="0 0 32 32"><path d="M8 15.2L13.6 20.8L23.4 10.5" fill="none" stroke="#fff" stroke-width="3.7" stroke-linecap="butt" stroke-linejoin="miter"/></svg>
<div class="r" style="left:1462px;top:960px;width:32px;height:32px;background:#3d72f2;border-radius:7.4px;"></div>
<svg class="r" style="left:1462px;top:960px;" width="32" height="32" viewBox="0 0 32 32"><path d="M8 15.2L13.6 20.8L23.4 10.5" fill="none" stroke="#fff" stroke-width="3.7" stroke-linecap="butt" stroke-linejoin="miter"/></svg>
<div class="t" style="left:1508.96px;top:901.77px;font-size:28.5px;line-height:28.5px;letter-spacing:0.261px;color:#1f2329;font-weight:normal;">Resize column widths on update automatically</div>
<div class="t" style="left:1510.02px;top:961.77px;font-size:28.5px;line-height:28.5px;letter-spacing:0.356px;color:#1f2329;font-weight:normal;">Show pivot table settings automatically</div>
<svg class="r" style="left:2023px;top:961px;" width="32" height="32" viewBox="0 0 32 32"><circle cx="15.8" cy="14.8" r="13.4" fill="none" stroke="#646a73" stroke-width="2.3"/><circle cx="15.9" cy="8.9" r="1.5" fill="#646a73"/><path d="M13.4 12.7H15.9V21.1M13 21.1H18.9" fill="none" stroke="#646a73" stroke-width="2.1"/></svg>
<div class="t" style="left:1509.00px;top:1014.24px;font-size:25px;line-height:25px;letter-spacing:0.384px;color:#646a73;font-weight:normal;">If not selected, pivot table settings won't open when you click a</div>
<div class="t" style="left:1509.70px;top:1054.44px;font-size:25px;line-height:25px;letter-spacing:0.350px;color:#646a73;font-weight:normal;">pivot table. You can open settings from the context menu.</div>
<div class="r" style="left:0px;top:0px;width:2272px;height:21px;background:rgba(0,0,0,0.33);"></div>
<div class="r" style="left:0px;top:1078px;width:2272px;height:16px;background:rgba(0,0,0,0.33);"></div>
<div class="r" style="left:0px;top:21px;width:1437px;height:1057px;background:rgba(0,0,0,0.33);"></div>
<div class="r" style="left:2260px;top:21px;width:12px;height:1057px;background:rgba(0,0,0,0.33);"></div>
</body></html>
